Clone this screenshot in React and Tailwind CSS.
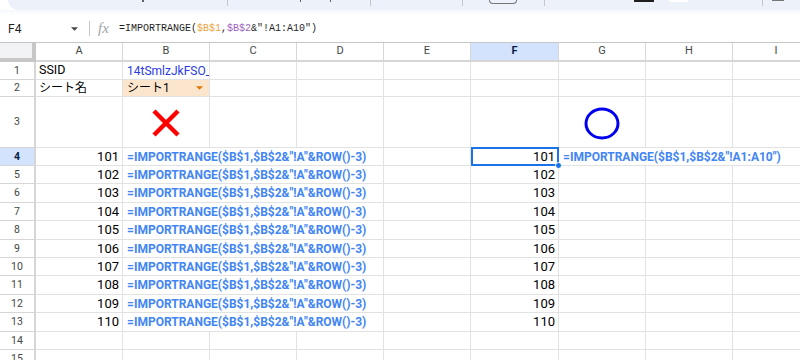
import React from 'react';

const values = [101, 102, 103, 104, 105, 106, 107, 108, 109, 110];
const rowFormula = '=IMPORTRANGE($B$1,$B$2&"!A"&ROW()-3)';

function Caret({ color = '#444746', w = 8, h = 4 }) {
    return (
        <svg width={w} height={h} viewBox="0 0 8 4">
            <path d="M0 0 L8 0 L4 4 Z" fill={color} />
        </svg>
    );
}

function ToolbarEdge() {
    return (
        <div className="h-[10px] ml-[8px] bg-[#edf2fa] rounded-bl-[14px] flex items-start">
            <div className="ml-[134px] w-[2px] h-[2px] bg-[#5f6368]" />
            <div className="ml-[83px] w-px h-[6px] bg-[#c4c7c5]" />
            <div className="ml-[72px] w-px h-[2px] bg-[#5f6368]" />
            <div className="ml-[29px] w-px h-[2px] bg-[#5f6368]" />
            <div className="ml-[39px] w-px h-[6px] bg-[#c4c7c5]" />
            <div className="ml-[91px] w-px h-[6px] bg-[#c4c7c5]" />
            <div className="ml-[26px] w-[28px] h-[4px] border border-t-0 border-[#747775] rounded-b-[4px]" />
            <div className="ml-[27px] w-px h-[6px] bg-[#c4c7c5]" />
            <div className="ml-[89px] w-[20px] h-[2px] bg-[#1f1f1f]" />
            <div className="ml-[15px] w-[19px] h-[2px] bg-white" />
            <div className="ml-[74px] w-px h-[6px] bg-[#c4c7c5]" />
            <div className="ml-[9px] w-[12px] h-px bg-[#747775]" />
        </div>
    );
}

function FormulaBar() {
    return (
        <div className="h-[27px] flex items-center">
            <div className="w-[89px] pl-[8px] pr-[11px] flex items-center justify-between">
                <span className="text-[12px] text-[#1f1f1f]">F4</span>
                <Caret w={7} h={4} />
            </div>
            <div className="w-px h-[15px] bg-[#c4c7c5]" />
            <span className="ml-[8px] w-[21px] font-['Liberation_Serif',serif] italic text-[15px] text-[#a0a4a8]">fx</span>
            <span className="font-['Liberation_Mono',monospace] text-[10px] text-[#1f1f1f] whitespace-nowrap">
                =IMPORTRANGE(<span className="text-[#e8a33d]">$B$1</span>,<span className="text-[#9c5fbf]">$B$2</span>&amp;"!A1:A10")
            </span>
        </div>
    );
}

const cell = 'border-r border-b border-[#e2e2e2] flex items-center overflow-hidden whitespace-nowrap';
const num = `${cell} justify-end pr-[3px] text-[13px] text-black`;

function ColHead({ label, active }) {
    return (
        <div className={`border-r border-b-2 border-[#d6d6d6] flex items-center justify-center text-[11px] ${active ? 'bg-[#d3e3fd] text-[#041e49] font-bold' : 'text-[#444746]'}`}>
            {label}
        </div>
    );
}

function RowHead({ n, active }) {
    return (
        <div className={`border-r-2 border-b border-[#d6d6d6] flex items-center justify-center text-[10.5px] ${active ? 'bg-[#d3e3fd] text-[#041e49] font-bold' : 'text-[#444746]'}`}>
            {n}
        </div>
    );
}

function FormulaCell({ text }) {
    return (
        <div className={`${cell} col-span-3 pl-[4px] text-[12px] font-bold text-[#4285f4]`}>
            {text}
        </div>
    );
}

export default function App() {
    return (
        <div className="w-[800px] h-[360px] overflow-hidden bg-white font-['Roboto','Noto_Sans_CJK_JP',sans-serif]">
            <ToolbarEdge />
            <div className="h-[5px] bg-gradient-to-b from-[#f4f7fc] to-white" />
            <FormulaBar />

            <div className="grid grid-cols-[36px_87px_87px_87px_87px_87px_88px_87px_87px_87px] grid-rows-[19px_18px_17px_51px_18px_18px_19px_18px_19px_18px_18px_19px_18px_19px_18px_18px] border-t border-[#c4c7c5]">
                {/* header */}
                <div className="bg-[#f1f3f4] border-r-4 border-b-4 border-[#c7c7c7]" />
                {['A', 'B', 'C', 'D', 'E', 'F', 'G', 'H', 'I'].map(c => (
                    <ColHead key={c} label={c} active={c === 'F'} />
                ))}

                {/* row 1 */}
                <RowHead n={1} />
                <div className={`${cell} pl-[3px] text-[12.5px] text-black`}>SSID</div>
                <div className={`${cell} pl-[4px] text-[12px] text-[#2a3ae6]`}>14tSmlzJkFSO_c4XzQ</div>
                {[0, 1, 2, 3, 4, 5, 6].map(i => <div key={i} className={cell} />)}

                {/* row 2 */}
                <RowHead n={2} />
                <div className={`${cell} pl-[3px] text-[12px] text-black`}>シート名</div>
                <div className={`${cell} bg-[#fce5cd] pl-[4px] pr-[6px] justify-between`}>
                    <span className="text-[12px] text-black">シート1</span>
                    <Caret color="#e37400" w={7} h={4} />
                </div>
                {[0, 1, 2, 3, 4, 5, 6].map(i => <div key={i} className={cell} />)}

                {/* row 3 */}
                <RowHead n={3} />
                <div className={cell} />
                <div className={`${cell} justify-center pt-[2px]`}>
                    <svg width="30" height="30" viewBox="0 0 30 30">
                        <path d="M3 3 L27 27 M27 3 L3 27" stroke="#ff0000" strokeWidth="4.5" />
                    </svg>
                </div>
                <div className={cell} />
                <div className={cell} />
                <div className={cell} />
                <div className={cell} />
                <div className={`${cell} justify-center pt-[3px]`}>
                    <svg width="36" height="33" viewBox="0 0 36 33">
                        <ellipse cx="18" cy="16.5" rx="16" ry="14.5" fill="none" stroke="#0000ee" strokeWidth="3" />
                    </svg>
                </div>
                <div className={cell} />
                <div className={cell} />

                {/* rows 4 - 13 */}
                {values.map((v, i) => {
                    const r = i + 4;
                    const first = i === 0;
                    return (
                        <React.Fragment key={r}>
                            <RowHead n={r} active={first} />
                            <div className={num}>{v}</div>
                            <FormulaCell text={rowFormula} />
                            <div className={cell} />
                            {first ? (
                                <div className={`${num} relative overflow-visible`}>
                                    {v}
                                    <div className="absolute left-0 top-[-1px] right-[-1px] bottom-[-1px] border-2 border-[#1a73e8]" />
                                    <div className="absolute right-[-4px] bottom-[-4px] w-[7px] h-[7px] rounded-full bg-[#1a73e8] border border-white" />
                                </div>
                            ) : (
                                <div className={num}>{v}</div>
                            )}
                            {first ? (
                                <FormulaCell text={'=IMPORTRANGE($B$1,$B$2&"!A1:A10")'} />
                            ) : (
                                <>
                                    <div className={cell} />
                                    <div className={cell} />
                                    <div className={cell} />
                                </>
                            )}
                        </React.Fragment>
                    );
                })}

                {/* rows 14 - 15 */}
                {[14, 15].map(r => (
                    <React.Fragment key={r}>
                        <RowHead n={r} />
                        {[0, 1, 2, 3, 4, 5, 6, 7, 8].map(i => <div key={i} className={cell} />)}
                    </React.Fragment>
                ))}
            </div>
        </div>
    );
}
